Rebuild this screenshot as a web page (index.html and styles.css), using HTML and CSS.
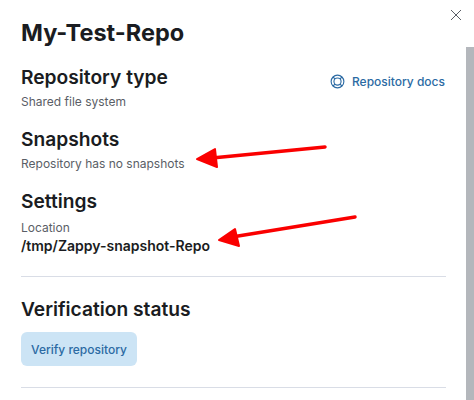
FILE: index.html
```html
<!DOCTYPE html>
<html lang="en">
<head>
    <meta charset="UTF-8">
    <title>My-Test-Repo</title>
    <link rel="stylesheet" href="styles.css">
</head>
<body>

<div class="flyout">
    <button class="close" aria-label="Close">
        <svg viewBox="0 0 12 12" width="12" height="12"><path d="M1 1l10 10M11 1L1 11"/></svg>
    </button>

    <h1 class="title">My-Test-Repo</h1>

    <div class="type-row">
        <div>
            <h2 class="heading">Repository type</h2>
            <p class="muted">Shared file system</p>
        </div>
        <a class="docs" href="#">
            <svg viewBox="0 0 16 16" width="15" height="15">
                <circle cx="8" cy="8" r="6.8"/>
                <circle cx="8" cy="8" r="3.8"/>
                <path d="M3.2 3.2l2.1 2.1M12.8 3.2l-2.1 2.1M3.2 12.8l2.1-2.1M12.8 12.8l-2.1-2.1"/>
            </svg>
            Repository docs
        </a>
    </div>

    <h2 class="heading snapshots">Snapshots</h2>
    <p class="muted no-snapshots">Repository has no snapshots</p>

    <h2 class="heading settings">Settings</h2>
    <p class="muted location">Location</p>
    <p class="path">/tmp/Zappy-snapshot-Repo</p>

    <hr class="rule first">

    <h2 class="heading">Verification status</h2>
    <button class="verify">Verify repository</button>

    <hr class="rule second">

    <!-- red arrows drawn over the screenshot -->
    <svg class="arrows" viewBox="0 0 474 400" width="474" height="400">
        <path class="shaft" d="M325 147L212 158"/>
        <path class="head" d="M197 159L215 149L217 167Z"/>
        <path class="shaft" d="M355 217L232 237"/>
        <path class="head" d="M219 240L235 229L239 246Z"/>
    </svg>
</div>

<div class="scrollbar"></div>

</body>
</html>
```

FILE: styles.css
```css
body {
    margin: 0;
    width: 474px;
    height: 400px;
    overflow: hidden;
    background-color: white;
    font-family: Inter, "Liberation Sans", sans-serif;
    color: #1a1c21;
}

.flyout {
    padding: 19px 0 0 21px;
    width: 425px;
}

.close {
    position: absolute;
    top: 9px;
    right: 12px;
    padding: 0;
    border: 0;
    background: none;
    line-height: 0;
}

.close path {
    fill: none;
    stroke: #5a5e66;
    stroke-width: 1;
}

.title {
    margin: 0;
    font-size: 23.5px;
    line-height: 28px;
    font-weight: 700;
}

.heading {
    margin: 0;
    font-size: 19.2px;
    line-height: 24px;
    font-weight: 600;
}

.type-row {
    display: flex;
    justify-content: space-between;
    margin-top: 18px;
}

.muted {
    margin: 5px 0 0;
    font-size: 12px;
    line-height: 16px;
    color: #5a5e66;
}

.docs {
    display: flex;
    align-items: center;
    gap: 7px;
    height: 18px;
    margin: 7px 1px 0 0;
    font-size: 12px;
    font-weight: 500;
    color: #2b6aa3;
    text-decoration: none;
}

.docs svg {
    fill: none;
    stroke: #2b6aa3;
    stroke-width: 1.2;
}

.snapshots {
    margin-top: 17px;
}

.muted.no-snapshots {
    margin-top: 5px;
}

.settings {
    margin-top: 17px;
}

.muted.location {
    margin-top: 7px;
}

.path {
    margin: 1px 0 0;
    font-size: 14px;
    line-height: 18px;
    font-weight: 600;
}

.rule {
    height: 1px;
    margin: 0;
    border: 0;
    background-color: #d9dde6;
}

.rule.first {
    margin-top: 21px;
    margin-bottom: 20px;
}

.rule.second {
    margin-top: 21px;
}

.verify {
    display: block;
    width: 116px;
    height: 34px;
    margin-top: 11px;
    padding: 1px 0 0;
    border: 0;
    border-radius: 6px;
    background-color: #cce4f5;
    font-family: inherit;
    font-size: 12px;
    font-weight: 500;
    color: #2b6aa3;
}

.arrows {
    position: absolute;
    top: 0;
    left: 0;
}

.shaft {
    fill: none;
    stroke: #fa0000;
    stroke-width: 3.5;
    stroke-linecap: round;
}

.head {
    fill: #fa0000;
    stroke: #fa0000;
    stroke-width: 2;
    stroke-linejoin: round;
}

.scrollbar {
    position: absolute;
    top: 47px;
    right: 0;
    width: 8px;
    height: 353px;
    background-color: #b4b7bc;
}
```
